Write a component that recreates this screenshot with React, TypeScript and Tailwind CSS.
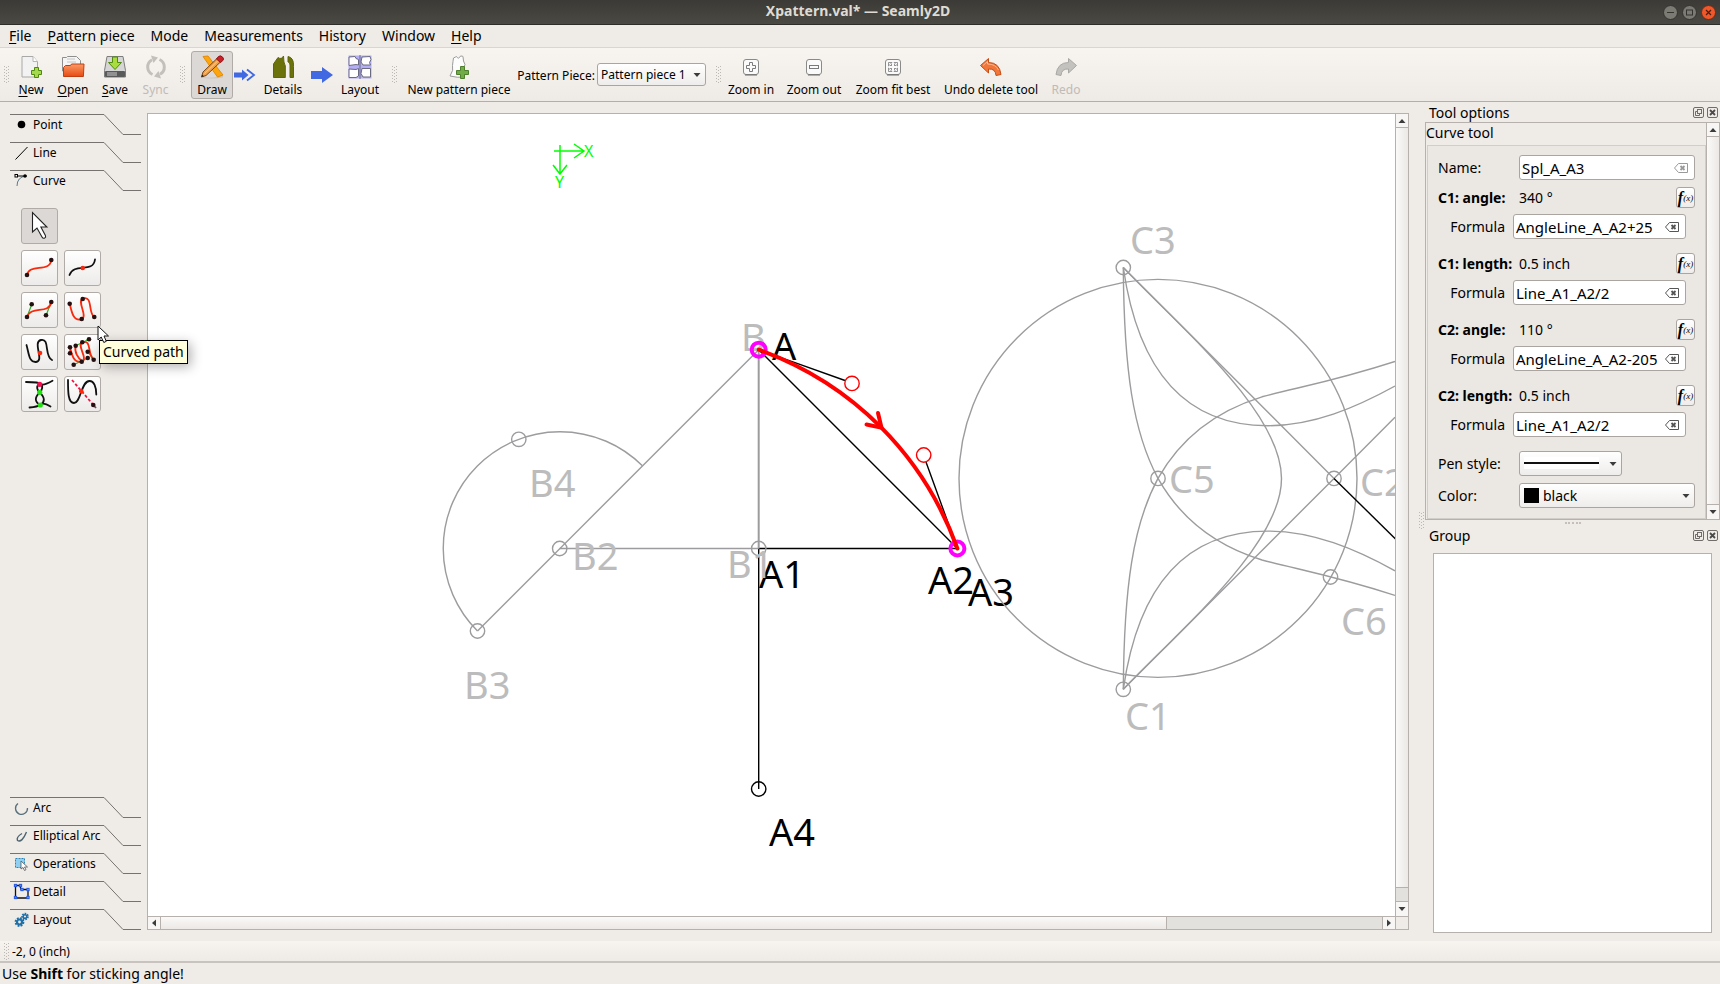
import React from "react";

type Kids = { children?: React.ReactNode };

/* ---------- shared pieces ---------- */

function Grip() {
  return (
    <svg width="6" height="18" className="shrink-0" aria-hidden="true">
      {[0, 3, 6, 9, 12, 15].map((y) => (
        <g key={y} fill="#bdb8b3">
          <rect x="0" y={y} width="1" height="1" />
          <rect x="2" y={y + 1} width="1" height="1" />
          <rect x="4" y={y} width="1" height="1" />
        </g>
      ))}
    </svg>
  );
}

function Triangle({ dir }: { dir: "up" | "down" | "left" | "right" }) {
  const d = {
    up: "M0.5 6 L4 2 L7.5 6Z",
    down: "M0.5 2 L4 6 L7.5 2Z",
    left: "M6 0.5 L2 4 L6 7.5Z",
    right: "M2 0.5 L6 4 L2 7.5Z",
  }[dir];
  return (
    <svg width="8" height="8" aria-hidden="true">
      <path d={d} fill="#3c3c3c" />
    </svg>
  );
}

function VScroll({ groove }: { groove: boolean }) {
  return (
    <div className="flex w-[13px] shrink-0 flex-col border-l border-[#b6b1ac] bg-[#e3e1dd]">
      <button aria-label="Scroll up" className="flex h-3.5 items-center justify-center border-b border-[#b6b1ac] bg-[#f8f6f4]">
        <Triangle dir="up" />
      </button>
      <div className="flex-1 border-b border-[#b6b1ac] bg-gradient-to-r from-[#fbfaf9] to-[#ebe8e5]" />
      {groove && <div className="h-3.5 border-b border-[#b6b1ac]" />}
      <button aria-label="Scroll down" className="flex h-3.5 items-center justify-center bg-[#f8f6f4]">
        <Triangle dir="down" />
      </button>
    </div>
  );
}

/* ---------- title and menus ---------- */

function TitleBar() {
  return (
    <header className="flex h-[25px] shrink-0 items-center border-b border-[#2e2d29] bg-gradient-to-b from-[#3b3a36] to-[#4a4943] pr-1">
      <div className="w-14" />
      <h1 className="flex-1 pb-0.5 text-center text-[14px] leading-5 font-bold text-[#dfdbd2]">Xpattern.val* — Seamly2D</h1>
      <div className="flex w-14 justify-end gap-1">
        <button aria-label="Minimize">
          <svg width="15" height="15">
            <circle cx="7.5" cy="7.5" r="7" fill="#7b7a73" stroke="#34332f" />
            <path d="M4 7.5h7" stroke="#34332f" />
          </svg>
        </button>
        <button aria-label="Maximize">
          <svg width="15" height="15">
            <circle cx="7.5" cy="7.5" r="7" fill="#7b7a73" stroke="#34332f" />
            <rect x="4.5" y="5" width="6" height="5" fill="none" stroke="#34332f" />
          </svg>
        </button>
        <button aria-label="Close">
          <svg width="15" height="15">
            <circle cx="7.5" cy="7.5" r="7" fill="#f0582c" stroke="#6b2d17" />
            <path d="M5 5l5 5M10 5l-5 5" stroke="#4a1d0d" strokeWidth="1.2" />
          </svg>
        </button>
      </div>
    </header>
  );
}

const menus: [string, string][] = [
  ["F", "ile"],
  ["P", "attern piece"],
  ["", "Mode"],
  ["", "Measurements"],
  ["", "History"],
  ["", "Window"],
  ["H", "elp"],
];

function MenuBar() {
  return (
    <nav className="flex h-[23px] shrink-0 items-center gap-4 border-b border-[#dad5d0] pl-[9px] text-[14px] leading-5">
      {menus.map(([key, rest]) => (
        <button key={key + rest}>
          <span className="underline underline-offset-2">{key}</span>
          {rest}
        </button>
      ))}
    </nav>
  );
}

/* ---------- toolbar icons ---------- */

const PlusGreen = ({ x, y }: { x: number; y: number }) => (
  <path
    transform={`translate(${x} ${y})`}
    d="M3.5 0.5h4v3h3v4h-3v3h-4v-3h-3v-4h3z"
    fill="#a5d84c"
    stroke="#4d8a0a"
    strokeLinejoin="round"
  />
);

const NewIcon = () => (
  <svg width="24" height="24">
    <path d="M3 1.5h11l4.5 5v15.5H3z" fill="#f2f2f2" stroke="#a8a8a8" />
    <path d="M14 1.5v5h4.5" fill="#fff" stroke="#b5b5b5" />
    <PlusGreen x={12} y={12} />
  </svg>
);
const OpenIcon = () => (
  <svg width="24" height="24">
    <path d="M1.5 2.5h4l1-1h9l4 4V16h-18z" fill="#f5f5f5" stroke="#8e8e8e" />
    <path d="M6 4h8M6 7h9" stroke="#c4c4c4" />
    <path d="M4.5 10.5h5l1-1.5h12.5l-.6 12.5H2.5v-9z" fill="url(#folderFill)" stroke="#c23d12" />
    <defs>
      <linearGradient id="folderFill" x1="0" y1="0" x2="0" y2="1">
        <stop offset="0" stopColor="#fa9c66" />
        <stop offset="1" stopColor="#e84a12" />
      </linearGradient>
    </defs>
  </svg>
);
const SaveIcon = () => (
  <svg width="24" height="24">
    <path d="M4 1.5h16l2.5 14v6.5h-21v-6.5z" fill="#d6d6d6" stroke="#7d7d7d" strokeLinejoin="round" />
    <rect x="2" y="16" width="20" height="6" rx="1" fill="#5a5a5a" />
    <path d="M4 18h10M4 20h10" stroke="#c9c9c9" />
    <path d="M9.5 2h5v5.5h4L12 14.5 5.5 7.5h4z" fill="#a9dc3e" stroke="#4e8b0c" strokeLinejoin="round" />
  </svg>
);
const SyncIcon = () => (
  <svg width="24" height="24" fill="none" stroke="#c3c0bc" strokeWidth="3">
    <path d="M8.5 19.5A8.3 8.3 0 0 1 8 4.700" />
    <path d="M15.5 4.5A8.3 8.3 0 0 1 16 19.300" />
    <path d="M7 0.5l7 2-4.500 5.500zM17 23.500l-7-2 4.500-5.500z" fill="#c3c0bc" stroke="none" />
  </svg>
);
const DrawIcon = () => (
  <svg width="24" height="24">
    <path d="M1 21.5q10 3 22-1v2q-12 2-22 0z" fill="#c9c4c0" />
    <path d="M3 1.5l5-.5 15 19-5.5 2z" fill="#fda50c" stroke="#e58a05" />
    <path d="M17.5 3l3.5 3.5L6 20.5l-4.5 1.5 1.5-5z" fill="#f0a04a" stroke="#7a4413" />
    <path d="M19 4.7L4.5 18.6" stroke="#fbd08c" />
    <path d="M16.5 4l2-2.5q2-1.500 4 .5t.3 3.6L20.5 7.5z" fill="#c9202a" stroke="#8f1218" />
    <path d="M1.5 22l.7-2.500 1.7 1.700z" fill="#222" />
  </svg>
);
const DetailsIcon = () => (
  <svg width="24" height="24" fill="#6b7209" stroke="#5f640e">
    <path d="M2.5 22.5V9L7 2.5q3.5 2.500 5.5-1.500 0 7 1.8 10v11.5z" />
    <path d="M17 1.5q6 1 5.5 10v11H19V10q0-3-2-3z" />
  </svg>
);
const LayoutIcon = () => (
  <svg width="24" height="24">
    <rect x="0.5" y="0.5" width="23" height="23" fill="#b3aef6" />
    <g fill="#fff" stroke="#6a6a80">
      <path d="M1 2l6-.5 1 2 2.500 1V10L8 9.5 1 10.5z" />
      <path d="M14 2l8-.5 1 3-1.5 3 1 2.500H15L13 7z" />
      <path d="M1 14l7 .5 2.500-1V21l-2.500 1.500H1z" />
      <path d="M14 13.5h8.5V22H15l-2-3.500z" />
      <path d="M12 0v24" />
    </g>
  </svg>
);
const PieceIcon = () => (
  <svg width="24" height="24">
    <path
      d="M6.5 3q2-1 3-1.500 2 3.500 4-.500 2 0 2.500.500 0 5 2 8-2 3-1 7l.5 5.500q-7 1-14.500-1 4-6 2.500-10.500Q6 6 6.5 3z"
      fill="#fdfdfd"
      stroke="#9b9b9b"
    />
    <path d="M13.5 11.500h4v4h4v4h-4v4h-4v-4h-4v-4h4z" fill="#6fae45" stroke="#4e7f2d" strokeLinejoin="round" />
  </svg>
);

const ZoomFrame = ({ children }: Kids) => (
  <svg width="24" height="24" fill="none">
    <rect x="4.5" y="4.5" width="15" height="15" rx="2.5" fill="#fafafa" stroke="#8a8a8a" />
    <path d="M6 20h12" stroke="#6a6a6a" />
    {children}
  </svg>
);
const ZoomInIcon = () => (
  <ZoomFrame>
    <path d="M10.5 7.5h3v3h3v3h-3v3h-3v-3h-3v-3h3z" stroke="#7a7a7a" />
  </ZoomFrame>
);
const ZoomOutIcon = () => (
  <ZoomFrame>
    <rect x="7.5" y="10.5" width="9" height="3" stroke="#7a7a7a" />
  </ZoomFrame>
);
const ZoomFitIcon = () => (
  <ZoomFrame>
    <path
      d="M7.5 11V7.5H11L9.8 8.8l1.2 1.200-1 1-1.200-1.200zM13 7.5h3.5V11l-1.300-1.200L14 11l-1-1 1.200-1.200zM7.5 13v3.5H11l-1.200-1.300L11 14l-1-1-1.200 1.200zM16.5 13v3.5H13l1.200-1.300L13 14l1-1 1.200 1.200z"
      stroke="#7a7a7a"
      strokeWidth="0.8"
    />
  </ZoomFrame>
);
const UndoIcon = () => (
  <svg width="24" height="24">
    <path
      d="M1.5 10.5L9.5 3.5v4q11 0 12.5 12l-5 1q-.5-7-7.500-6.500v4z"
      fill="#f0763a"
      stroke="#c54e17"
      strokeLinejoin="round"
    />
    <path d="M4 10.5l4.5-4v2.500q8 0 11 6" fill="none" stroke="#fbb98f" />
  </svg>
);
const RedoIcon = () => (
  <svg width="24" height="24">
    <path
      d="M22.5 10.5L14.5 3.5v4q-11 0-12.500 12l5 1q.5-7 7.500-6.500v4z"
      fill="#c4c2bf"
      stroke="#aaa8a5"
      strokeLinejoin="round"
    />
  </svg>
);

function ToolButton({ icon, width, accel, label, disabled, active }: {
  icon: React.ReactNode;
  width: string;
  accel?: string;
  label: string;
  disabled?: boolean;
  active?: boolean;
}) {
  return (
    <button
      disabled={disabled}
      className={`flex h-12 shrink-0 flex-col items-center rounded-[3px] border pt-[3px] text-[12px] leading-4 whitespace-nowrap ${width} ${
        active ? "border-[#b0aba7] bg-[#dcd8d5]" : "border-transparent"
      } ${disabled ? "text-[#bfbbb7]" : ""}`}
    >
      {icon}
      <span className="mt-[3px]">
        {accel && <span className="underline underline-offset-2">{accel}</span>}
        {label}
      </span>
    </button>
  );
}

function Toolbar() {
  return (
    <div className="flex h-[54px] shrink-0 items-center border-b border-[#b3aeaa] bg-gradient-to-b from-[#f8f5f1] to-[#eeeae6] pl-1">
      <Grip />
      <ToolButton width="w-[42px]" icon={<NewIcon />} accel="N" label="ew" />
      <ToolButton width="w-[42px]" icon={<OpenIcon />} accel="O" label="pen" />
      <ToolButton width="w-[42px]" icon={<SaveIcon />} accel="S" label="ave" />
      <ToolButton width="w-[39px]" icon={<SyncIcon />} label="Sync" disabled />
      <div className="flex w-4 justify-center">
        <Grip />
      </div>
      <ToolButton width="w-[42px]" icon={<DrawIcon />} label="Draw" active />
      <svg width="24" height="14" className="shrink-0" aria-hidden="true">
        <path d="M1 4.5h8V1.5L15.5 7 9 12.5v-3H1z" fill="#4169e1" />
        <path d="M14 1.5L21 7l-7 5.500" fill="none" stroke="#4169e1" strokeWidth="1.8" />
      </svg>
      <ToolButton width="w-[52px]" icon={<DetailsIcon />} label="Details" />
      <svg width="25" height="18" className="shrink-0" aria-hidden="true">
        <path d="M2 5h11V1l11 8-11 8v-4H2z" fill="#4169e1" />
      </svg>
      <ToolButton width="w-[52px]" icon={<LayoutIcon />} label="Layout" />
      <div className="flex w-[17px] justify-center">
        <Grip />
      </div>
      <ToolButton width="w-[112px]" icon={<PieceIcon />} label="New pattern piece" />
      <label htmlFor="piece" className="w-20 pt-0.5 text-right text-[12px] whitespace-nowrap">
        Pattern Piece:
      </label>
      <div className="relative ml-0.5 w-[109px] shrink-0">
        <select
          id="piece"
          className="block h-[23px] w-full appearance-none rounded-[3px] border border-[#aaa5a1] bg-gradient-to-b from-white to-[#efedeb] pl-[3px] text-[12px] leading-4"
        >
          <option>Pattern piece 1</option>
        </select>
        <span className="pointer-events-none absolute inset-y-0 right-[5px] flex items-center">
          <Triangle dir="down" />
        </span>
      </div>
      <div className="flex w-4 justify-end">
        <Grip />
      </div>
      <ToolButton width="w-[58px]" icon={<ZoomInIcon />} label="Zoom in" />
      <ToolButton width="w-[68px]" icon={<ZoomOutIcon />} label="Zoom out" />
      <ToolButton width="w-[90px]" icon={<ZoomFitIcon />} label="Zoom fit best" />
      <ToolButton width="w-[106px]" icon={<UndoIcon />} label="Undo delete tool" />
      <ToolButton width="w-[44px]" icon={<RedoIcon />} label="Redo" disabled />
    </div>
  );
}

/* ---------- left tool box ---------- */

function Tab({ icon, label }: { icon: React.ReactNode; label: string }) {
  return (
    <button className="relative flex h-7 w-[132px] shrink-0 items-start text-left text-[12px] leading-4">
      <svg width="132" height="22" className="absolute inset-0" fill="none" aria-hidden="true">
        <path d="M0 0.5H94L113 20.5H131" stroke="#76726f" />
      </svg>
      <span className="mt-[3px] ml-1 flex items-center gap-1">
        <svg width="15" height="16" className="overflow-visible" fill="none" aria-hidden="true">
          {icon}
        </svg>
        {label}
      </span>
    </button>
  );
}

const Dot = ({ x, y, c = "#241010", r = 2.3 }: { x: number; y: number; c?: string; r?: number }) => (
  <circle cx={x} cy={y} r={r} fill={c} />
);

function PaletteButton({ label, active, children }: { label: string; active?: boolean } & Kids) {
  return (
    <button
      aria-label={label}
      className={`h-9 w-[37px] rounded-[3px] border border-[#b0aba7] ${
        active ? "bg-[#dcd8d5]" : "bg-gradient-to-b from-white to-[#edebe9]"
      }`}
    >
      <svg width="35" height="34" viewBox="1 1 35 34" fill="none" strokeWidth="1.8" strokeLinecap="round">
        {children}
      </svg>
    </button>
  );
}

const RED = "#f8290c";

const fixedPathDots: [number, number][] = [
  [6, 13.3], [6, 19.3], [11.7, 11.7], [18.3, 8.3], [25, 5.3],
  [23.7, 17.7], [23.7, 24], [29.7, 25.7], [17.7, 27.7], [9.7, 30.7],
];

function ToolBox() {
  return (
    <aside className="relative flex w-[147px] shrink-0 flex-col pt-3 pb-1 pl-2.5">
      <Tab label="Point" icon={<circle cx="7.5" cy="7.5" r="3.8" fill="#000" />} />
      <Tab label="Line" icon={<path d="M1.5 14.5L13.5 2" stroke="#000" />} />
      <Tab
        label="Curve"
        icon={
          <g>
            <path d="M3 13q0-9 9-10" stroke="#5c7c8c" />
            <path d="M2 3h11" stroke="#000" />
            <rect x="1" y="1.5" width="2.5" height="2.5" fill="#fff" stroke="#000" />
            <circle cx="11" cy="3" r="1.7" fill="#000" />
          </g>
        }
      />
      <div className="mt-[10px] ml-[11px] grid w-20 grid-cols-2 gap-x-1.5 gap-y-1.5">
        <PaletteButton label="Select" active>
          <path
            d="M11.5 4.5v19.5l4.5-4 5 9q1 1.8 2.7 1 1.5-.8.7-2.500l-4.500-8.500h6z"
            fill="#fff"
            stroke="#222"
            strokeWidth="1.1"
          />
        </PaletteButton>
        <span />
        <PaletteButton label="Simple curve">
          <path d="M6 25C8 13 29 23 30.3 10" stroke={RED} />
          <Dot x={6} y={25} />
          <Dot x={30.3} y={10} />
        </PaletteButton>
        <PaletteButton label="Point on curve">
          <path d="M5.5 25C10 12 29 24 31 9.5" stroke="#111" />
          <Dot x={18.7} y={18} c={RED} />
        </PaletteButton>
        <PaletteButton label="Fixed curve">
          <path d="M6 25L10.7 12.5M30.3 10L25 23.5" stroke="#2fae2f" strokeWidth="1.2" />
          <path d="M6 25C10 13 28 23 30.3 10" stroke={RED} />
          <Dot x={6} y={25} />
          <Dot x={30.3} y={10} />
          <Dot x={10.7} y={12.3} />
          <Dot x={25} y={23.3} />
        </PaletteButton>
        <PaletteButton label="Curved path">
          <path d="M5.7 11.7C8 22 10 29 17 27.5C25 25 12 9 19 6.5C29 3 24 22 30.3 25" stroke={RED} />
          <Dot x={5.7} y={11.7} />
          <Dot x={17.7} y={27} />
          <Dot x={18.7} y={7} />
          <Dot x={30.3} y={25} />
        </PaletteButton>
        <PaletteButton label="Point on curved path">
          <path d="M5.5 11C8 20 8 28.5 15 28C24 27 11 8 20 6C29 4 23 22 31 26" stroke="#111" />
          <Dot x={19} y={19} c={RED} />
        </PaletteButton>
        <PaletteButton label="Fixed curved path">
          <path d="M6 13.3v6M11.7 11.7L25 5.3M9.7 30.7L23.7 24M23.7 17.7l6 8" stroke="#2fae2f" strokeWidth="1.2" />
          <path
            d="M6 13.3C8 22 10 29 17.7 27.7C25 25 12 11 18.3 8.3C28 5 23 20 29.7 25.7M11.7 12C10 18 14 24 18 27"
            stroke={RED}
          />
          {fixedPathDots.map(([x, y]) => (
            <Dot key={`${x}-${y}`} x={x} y={y} />
          ))}
        </PaletteButton>
        <PaletteButton label="Intersect curves">
          <path
            d="M5 6Q18 6 20 8T31.5 4.7M8.5 31.5q8-.5 11-3t10 2M18 8q-4 4 .7 8.300q-8 8 .6 12.700M20 8q3 4-1.300 8.300q8 8 .6 12.700"
            stroke="#111"
          />
          <Dot x={18.7} y={8.3} c="#f01050" r={2.6} />
          <Dot x={18.7} y={16.3} c="#22e012" r={2.6} />
          <Dot x={19.3} y={29} c="#22e012" r={2.6} />
        </PaletteButton>
        <PaletteButton label="Curve intersect axis">
          <path d="M4 4C4 16 4 27 10 27C17 27 17 5 25.5 5C30 5 32.3 11 32.3 18.5" stroke="#111" />
          <path d="M8 4L32 32" stroke="#f01040" strokeDasharray="3 2" strokeLinecap="butt" />
          <Dot x={17.3} y={15.3} c={RED} />
          <Dot x={29.3} y={29} />
        </PaletteButton>
      </div>

      <div className="mt-auto flex flex-col">
        <Tab label="Arc" icon={<path d="M4 3.5A6 6 0 1 0 13.5 8" stroke="#56707c" strokeWidth="1.3" />} />
        <Tab label="Elliptical Arc" icon={<path d="M8 5.5Q2 9 3.5 12.5Q8 15 12.5 4" stroke="#4d6472" strokeWidth="1.4" />} />
        <Tab
          label="Operations"
          icon={
            <g>
              <rect x="1.5" y="2.5" width="9" height="9" fill="#8fd0f2" stroke="#2a86b8" strokeDasharray="2 1" />
              <path d="M7 5v8l2-1.500 1.500 3 1.500-.8-1.500-2.700h3z" fill="#fff" stroke="#555" strokeWidth="0.8" />
            </g>
          }
        />
        <Tab
          label="Detail"
          icon={
            <g>
              <path d="M1.5 1.5H6l1 4h7v8.5H1.5z" stroke="#111" strokeWidth="1.3" />
              <g fill="#fff" stroke="#2b5fe0" strokeWidth="1.3">
                <rect x="0.5" y="0.5" width="2" height="2" />
                <rect x="5.5" y="0.5" width="2" height="2" />
                <rect x="7" y="4.5" width="2" height="2" />
                <rect x="13" y="4.5" width="2" height="2" />
                <rect x="0.5" y="12.5" width="2" height="2" />
                <rect x="13" y="12.5" width="2" height="2" />
              </g>
            </g>
          }
        />
        <Tab
          label="Layout"
          icon={
            <g stroke="#1f6fa8">
              <circle cx="5.5" cy="10" r="3.7" strokeWidth="2.4" strokeDasharray="1.7 1.2" />
              <circle cx="5.5" cy="10" r="2.5" strokeWidth="2.2" />
              <circle cx="11" cy="4.5" r="2.8" strokeWidth="2" strokeDasharray="1.5 1" />
              <circle cx="11" cy="4.5" r="1.8" strokeWidth="1.5" />
            </g>
          }
        />
      </div>

      <svg width="14" height="20" className="absolute top-[223px] left-[97px] z-20" aria-hidden="true">
        <path d="M1 1v14l3.2-3 2.6 5.500 2.500-1.200L7 11h4.5z" fill="#fff" stroke="#111" />
      </svg>
      <div
        role="tooltip"
        className="absolute top-[238px] left-[99px] z-10 h-6 border border-black bg-[#ffffdc] px-[3px] text-[14px] leading-[22px] whitespace-nowrap shadow-[3px_3px_12px_rgba(0,0,0,0.3)]"
      >
        Curved path
      </div>
    </aside>
  );
}

/* ---------- drawing canvas ---------- */

const starFromC3 =
  "M1123.3 267.5C1124 370 1133 432 1158 478.4C1183 523 1220 547 1262 560C1300 570 1335 576 1395 595.4";
const starFromC1 =
  "M1123.3 689.3C1124 586.8 1133 524.8 1158 478.4C1183 433.8 1220 409.8 1262 396.8C1300 386.8 1335 380.8 1395 361.4";

const grayPoints: [number, number][] = [
  [758.7, 548.5], [559.7, 548.5], [477.5, 631], [518.8, 439.3],
  [1158, 478.4], [1123.3, 267.5], [1123.3, 689.3], [1334, 478.4], [1330.5, 577],
];

const grayLabels: [string, number, number][] = [
  ["B", 741, 351], ["B4", 529, 497], ["B2", 572, 570], ["B1", 727, 578], ["B3", 464, 699],
  ["C3", 1130, 254], ["C5", 1169, 493], ["C2", 1360, 496], ["C6", 1341, 635], ["C1", 1125, 730],
];

const blackLabels: [string, number, number][] = [
  ["A", 772, 360], ["A1", 759, 588], ["A2", 928, 594], ["A3", 968, 606], ["A4", 769, 846],
];

function Canvas() {
  return (
    <main className="my-[11px] flex min-w-0 flex-1 flex-col border border-[#b6b1ac]">
      <div className="flex min-h-0 flex-1">
        <div className="relative flex-1 overflow-hidden bg-white">
          <svg className="absolute inset-0 h-full w-full" fill="none">
            <g transform="translate(-148 -114)">
              <g stroke="#00ff00" strokeWidth="1.5">
                <path d="M560 145V174M553 165l7 9 7-9M554 151H584M574 144l10 7-10 7" />
              </g>
              <g fill="#00ff00" fontSize="16">
                <text x="584" y="157">X</text>
                <text x="555" y="188">Y</text>
              </g>

              <g stroke="#000" strokeWidth="1.4">
                <path d="M758.7 349.7L957.4 548.5H758.7V789" />
                <path d="M758.7 349.7L845 380.5M926 462L957.4 548.5" />
                <circle cx="758.7" cy="789" r="7.2" />
              </g>
              <g fontSize="38" fill="#000">
                {blackLabels.map(([t, x, y]) => (
                  <text key={t} x={x} y={y}>{t}</text>
                ))}
              </g>

              <g stroke="#9c9c9f" strokeWidth="1.4">
                <path d="M477.5 631L758.7 349.7" />
                <path d="M758.7 349.7V548.5" strokeWidth="2" />
                <path d="M758.7 548.5H559.7" />
                <path d="M642.4 465.8A116.6 116.6 0 0 0 477.5 631" />
                <circle cx="1158" cy="478.4" r="199" />
                <path d={starFromC3} />
                <path d={starFromC1} />
                <path d="M1123.3 267.5C1138 370 1184 425.7 1268 425.7C1313 425.7 1355 408 1395 386" />
                <path d="M1123.3 689.3C1138 586.8 1184 531.1 1268 531.1C1313 531.1 1355 548.8 1395 570.8" />
                <path d="M1123.3 267.5C1180 327 1281.5 412 1281.5 478.4C1281.5 544.8 1180 629.8 1123.3 689.3" />
                <path d="M1123.3 267.5L1334 478.4M1123.3 689.3L1334 478.4L1395 417.2" />
                {grayPoints.map(([x, y]) => (
                  <circle key={`${x}-${y}`} cx={x} cy={y} r="7.2" />
                ))}
              </g>
              <path d="M1334 478.4L1395.5 539" stroke="#000" strokeWidth="1.4" />
              <g fontSize="38" fill="#bcbcbc">
                {grayLabels.map(([t, x, y]) => (
                  <text key={t} x={x} y={y}>{t}</text>
                ))}
              </g>

              <g stroke="#ff00ff" strokeWidth="4">
                <circle cx="758.7" cy="349.7" r="7" />
                <circle cx="957.4" cy="548.5" r="7" />
              </g>
              <g stroke="#ff0000" strokeLinecap="round">
                <path d="M758.7 349.7C852 383.4 923.7 455 957.4 548.5" strokeWidth="4" />
                <path d="M878 413L881.5 427.7L866.5 424.5" strokeWidth="4" />
                <circle cx="852" cy="383.4" r="7.2" strokeWidth="1.4" />
                <circle cx="923.7" cy="455" r="7.2" strokeWidth="1.4" />
              </g>
            </g>
          </svg>
        </div>
        <VScroll groove />
      </div>
      <div className="flex h-[13px] shrink-0 border-t border-[#b6b1ac] bg-[#e3e1dd]">
        <button aria-label="Scroll left" className="flex w-[13px] items-center justify-center border-r border-[#b6b1ac] bg-[#f8f6f4]">
          <Triangle dir="left" />
        </button>
        <div className="flex-[1006] border-r border-[#b6b1ac] bg-gradient-to-b from-[#fbfaf9] to-[#ebe8e5]" />
        <div className="flex-[215]" />
        <button aria-label="Scroll right" className="flex w-[13px] items-center justify-center border-l border-[#b6b1ac] bg-[#f8f6f4]">
          <Triangle dir="right" />
        </button>
        <div className="w-[13px] border-l border-[#b6b1ac] bg-[#efebe7]" />
      </div>
    </main>
  );
}

/* ---------- right docks ---------- */

function DockTitle({ children }: Kids) {
  return (
    <div className="flex h-5 items-center gap-[3px] pr-0.5 pl-1">
      <h2 className="flex-1 pt-px text-[14px] leading-5">{children}</h2>
      <button aria-label="Float">
        <svg width="11" height="11" fill="none" stroke="#6f6c69" className="block">
          <rect x="0.5" y="0.5" width="10" height="10" rx="1.5" />
          <rect x="4.5" y="2.5" width="4" height="4" />
          <path d="M4.5 4.5h-2v4h4v-2" />
        </svg>
      </button>
      <button aria-label="Close dock">
        <svg width="11" height="11" fill="none" stroke="#6f6c69" className="block">
          <rect x="0.5" y="0.5" width="10" height="10" rx="1.5" />
          <path d="M3 3l5 5M8 3l-5 5" stroke="#4a4a4a" strokeWidth="1.8" />
        </svg>
      </button>
    </div>
  );
}

function ClearIcon({ color }: { color: string }) {
  return (
    <svg width="14" height="10" fill="none" stroke={color} aria-hidden="true" className="block">
      <path d="M0.5 5L4.5 0.5H13.5V9.5H4.5Z" />
      <path d="M6.5 3l4 4M10.5 3l-4 4" strokeWidth="1.8" />
    </svg>
  );
}

function TextField({ id, value, faint }: { id: string; value: string; faint?: boolean }) {
  return (
    <div className="relative w-full">
      <input
        id={id}
        type="text"
        defaultValue={value}
        className="block h-[25px] w-full rounded-[3px] border border-[#aaa5a1] bg-white pr-6 pl-0.5 text-[15px] leading-5"
      />
      <button aria-label="Clear" className="absolute inset-y-0 right-[7px] flex items-center">
        <ClearIcon color={faint ? "#9a9a9a" : "#555555"} />
      </button>
    </div>
  );
}

function FormulaRow({ id, name, value, formula }: { id: string; name: string; value: string; formula: string }) {
  return (
    <div className="mb-3.5 flex flex-col gap-1.5">
      <div className="flex h-[21px] items-center">
        <span className="w-[81px] shrink-0 text-[14px] font-bold whitespace-nowrap">{name}</span>
        <output className="flex-1 text-[14px]">{value}</output>
        <button
          aria-label={`Edit ${name}`}
          className="h-[21px] w-[19px] rounded-[3px] border border-[#aaa5a1] bg-gradient-to-b from-white to-[#efedeb] font-['Liberation_Serif',serif] text-[16px] leading-4 font-bold italic"
        >
          <span className="flex items-center justify-center">
            f<span className="text-[9px] font-normal">(x)</span>
          </span>
        </button>
      </div>
      <div className="flex items-center pr-[9px]">
        <label htmlFor={id} className="w-[75px] shrink-0 pr-2 text-right text-[14px]">
          Formula
        </label>
        <TextField id={id} value={formula} />
      </div>
    </div>
  );
}

function OptionsDock() {
  return (
    <section>
      <DockTitle>Tool options</DockTitle>
      <div className="flex border border-[#b6b1ac]">
        <div className="min-w-0 flex-1">
          <p className="h-[22px] text-[14px] leading-5">Curve tool</p>
          <div className="ml-px border border-[#d2cdc8] bg-[#ebe7e3] pt-[9px] pr-2.5 pb-2.5 pl-2.5">
            <div className="mb-[7px] flex items-center">
              <label htmlFor="name" className="w-[81px] shrink-0 text-[14px]">Name:</label>
              <TextField id="name" value="Spl_A_A3" faint />
            </div>
            <FormulaRow id="c1a" name="C1: angle:" value="340 °" formula="AngleLine_A_A2+25" />
            <FormulaRow id="c1l" name="C1: length:" value="0.5 inch" formula="Line_A1_A2/2" />
            <FormulaRow id="c2a" name="C2: angle:" value="110 °" formula="AngleLine_A_A2-205" />
            <FormulaRow id="c2l" name="C2: length:" value="0.5 inch" formula="Line_A1_A2/2" />
            <div className="mb-[7px] flex items-center">
              <label htmlFor="pen" className="w-[81px] shrink-0 text-[14px]">Pen style:</label>
              <div className="relative w-[103px]">
                <select
                  id="pen"
                  className="block h-[25px] w-full appearance-none rounded-[3px] border border-[#aaa5a1] bg-gradient-to-b from-white to-[#efedeb] text-transparent"
                >
                  <option>Solid</option>
                </select>
                <span className="pointer-events-none absolute top-[6px] left-[5px] flex h-3 w-[75px] items-center bg-white">
                  <span className="h-0.5 w-full bg-[#111]" />
                </span>
                <span className="pointer-events-none absolute inset-y-0 right-[5px] flex items-center">
                  <Triangle dir="down" />
                </span>
              </div>
            </div>
            <div className="flex items-center">
              <label htmlFor="color" className="w-[81px] shrink-0 text-[14px]">Color:</label>
              <div className="relative flex-1">
                <select
                  id="color"
                  className="block h-[25px] w-full appearance-none rounded-[3px] border border-[#aaa5a1] bg-gradient-to-b from-white to-[#efedeb] pl-[23px] text-[14px] leading-5"
                >
                  <option>black</option>
                </select>
                <span className="pointer-events-none absolute top-[5px] left-[5px] size-[15px] bg-black" />
                <span className="pointer-events-none absolute inset-y-0 right-[5px] flex items-center">
                  <Triangle dir="down" />
                </span>
              </div>
            </div>
          </div>
        </div>
        <VScroll groove={false} />
      </div>
    </section>
  );
}

function RightPanel() {
  return (
    <aside className="flex w-[295px] shrink-0 flex-col">
      <OptionsDock />
      <div className="flex h-[5px] items-center justify-center">
        <span className="w-4 border-t-2 border-dotted border-[#c4bfba]" />
      </div>
      <section className="flex flex-1 flex-col">
        <DockTitle>Group</DockTitle>
        <div className="m-2 flex-1 border border-[#b6b1ac] bg-white" />
      </section>
    </aside>
  );
}

/* ---------- page ---------- */

export default function App() {
  return (
    <div className="flex min-h-screen flex-col bg-[#efebe7] font-['Noto_Sans',sans-serif] text-black">
      <TitleBar />
      <MenuBar />
      <Toolbar />
      <div className="flex flex-1">
        <ToolBox />
        <Canvas />
        <div className="flex w-4 shrink-0 items-center justify-end pb-px">
          <Grip />
        </div>
        <RightPanel />
      </div>
      <div className="flex h-[22px] shrink-0 items-center gap-0.5 border-b-2 border-[#c8c3be] bg-gradient-to-b from-[#f7f4f0] to-[#eeeae6] pt-0.5 pl-1 text-[12px] leading-4">
        <Grip />
        <span>-2, 0 (inch)</span>
      </div>
      <footer className="h-[21px] shrink-0 pl-0.5 text-[14px] leading-[21px]">
        Use <b>Shift</b> for sticking angle!
      </footer>
    </div>
  );
}
